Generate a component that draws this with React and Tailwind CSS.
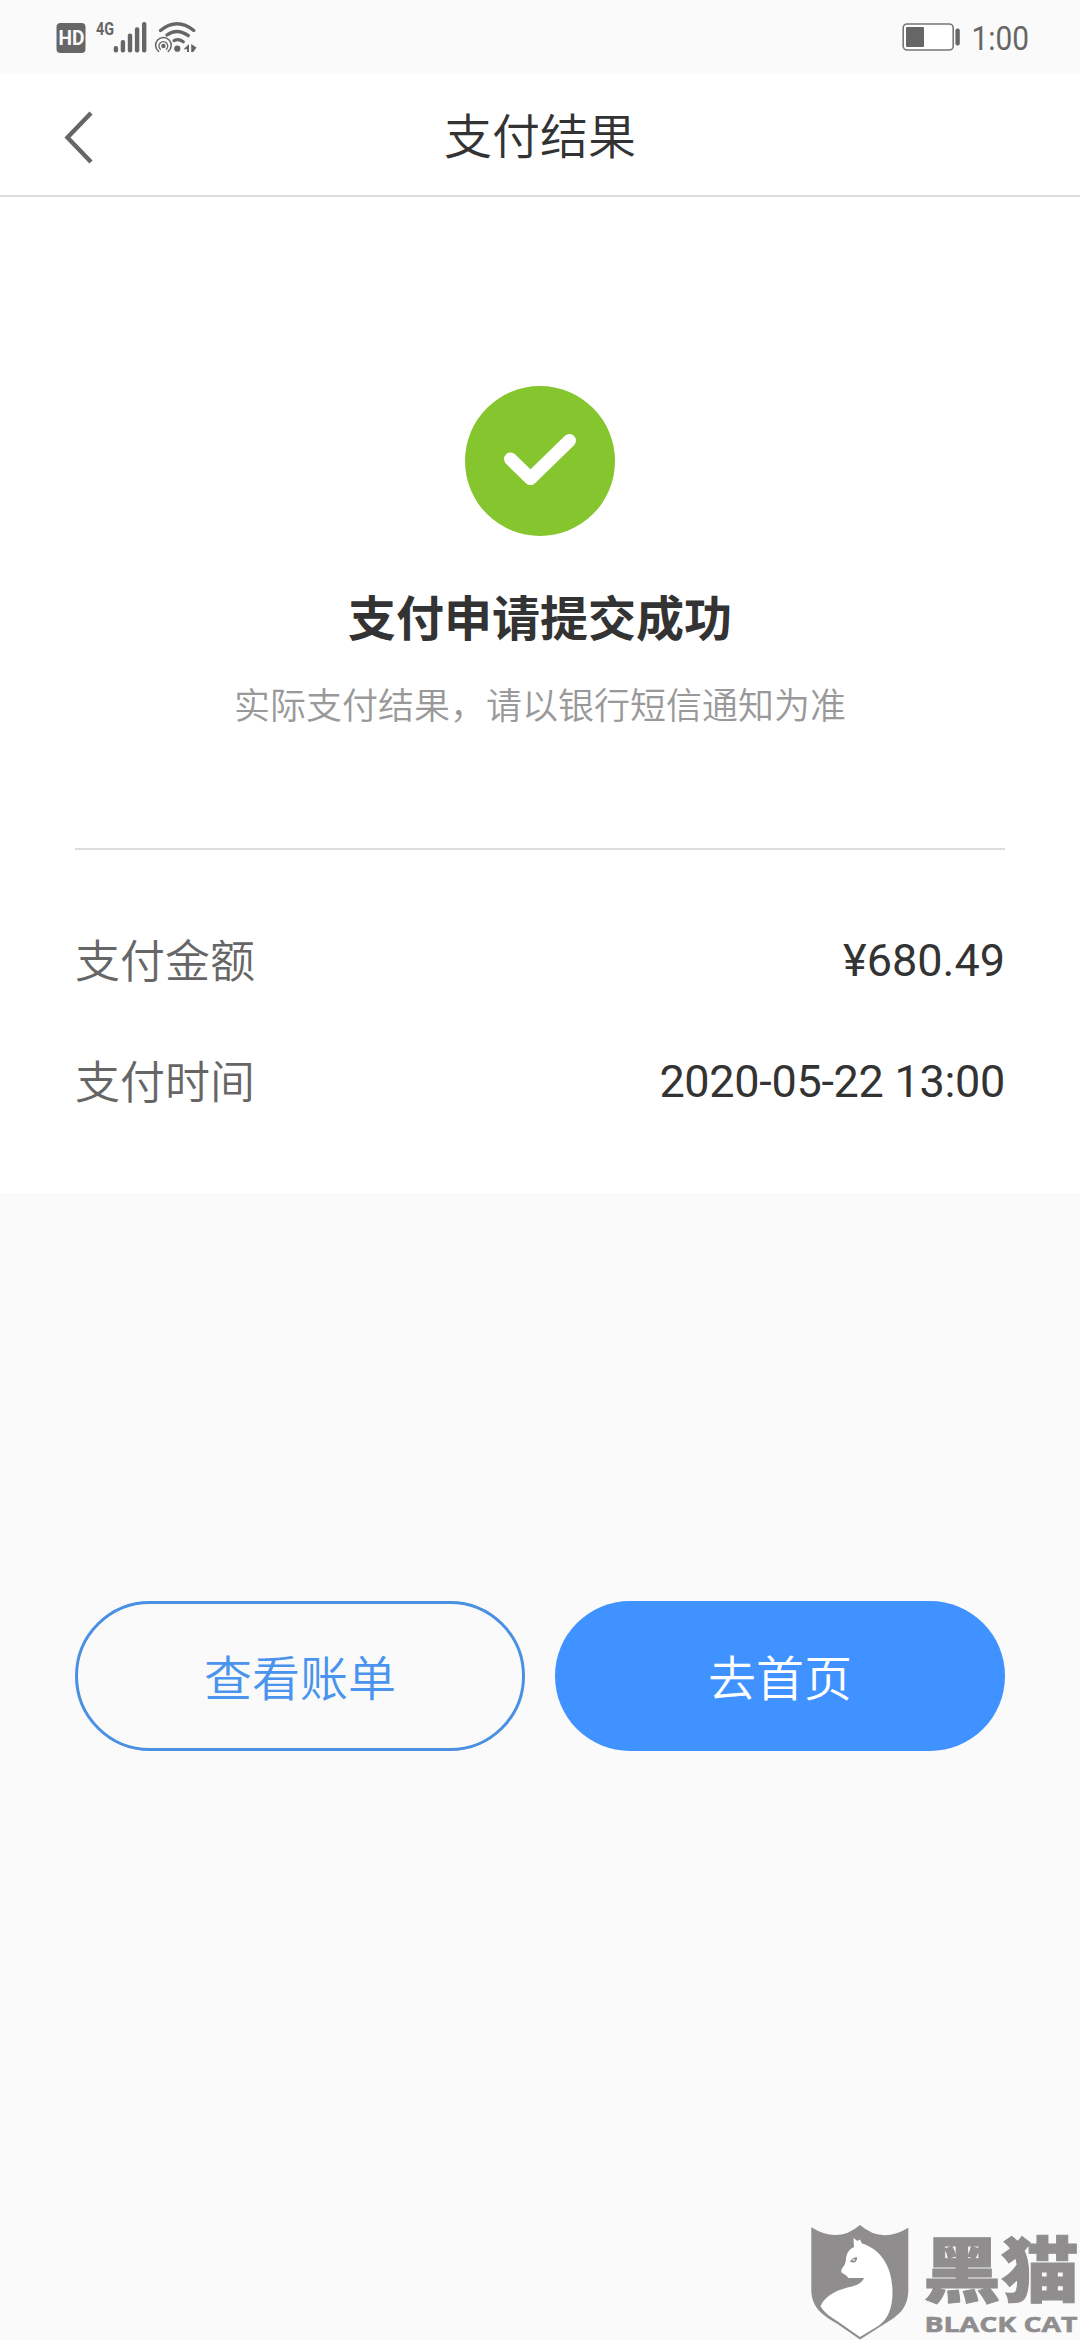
import React from "react";

// ── Data ───────────────────────────────────────────────────────────────────
const details = [
  { label: "支付金额", value: "¥680.49", valueClass: "pt-px" },
  { label: "支付时间", value: "2020-05-22 13:00", valueClass: "pt-px tracking-[-0.3px]" },
];

// ── Icons ──────────────────────────────────────────────────────────────────
const SignalIcons = () => (
  <svg width="160" height="74" viewBox="0 0 160 74" fill="#666666">
    <rect x="16.5" y="23" width="29" height="30" rx="4" />
    <text
      x="18.5"
      y="45.3"
      textLength="26"
      lengthAdjust="spacingAndGlyphs"
      fill="#fafafa"
      className="font-[Roboto] text-[20px] font-bold"
    >
      HD
    </text>
    <text
      x="56"
      y="35.3"
      textLength="18"
      lengthAdjust="spacingAndGlyphs"
      className="font-[Roboto] text-[19px] font-bold"
    >
      4G
    </text>
    <rect x="73.7" y="46" width="4.4" height="6.5" rx="2" />
    <rect x="80.7" y="40" width="4.4" height="12.5" rx="2" />
    <rect x="87.8" y="33.5" width="4.4" height="19" rx="2" />
    <rect x="94.9" y="27.3" width="4.4" height="25.2" rx="2" />
    <rect x="102" y="22" width="4.4" height="30.5" rx="2" />
    <g fill="none" stroke="#666666" strokeLinecap="round">
      <path d="M120.5 30.5Q137 17 153.8 30.5" strokeWidth="3.4" />
      <path d="M127 35Q137 27.6 148.3 35.6" strokeWidth="3.4" />
      <path d="M134 40.6Q138.5 38.4 143.3 41.8" strokeWidth="3.2" />
      <path d="M118.6 51.4A7.8 7.8 0 1 1 128.2 51.4" strokeWidth="1.5" />
      <path d="M120.3 49.2A4.4 4.4 0 1 1 126.4 49.2" strokeWidth="1.3" />
    </g>
    <circle cx="123.4" cy="46" r="2.2" />
    <circle cx="137.3" cy="48.7" r="3.1" />
    <path d="M143.6 49.3L149 44V52H147V49.3ZM151.2 44L156.5 47.5L153.3 52H151.2Z" />
  </svg>
);

const BatteryIcon = () => (
  <svg width="60" height="30" viewBox="0 0 60 30">
    <rect x="1.2" y="2" width="50" height="26" rx="4" fill="#ffffff" stroke="#777777" strokeWidth="1.6" />
    <rect x="4" y="5" width="18" height="20" rx="1" fill="#666666" />
    <rect x="53.4" y="6.5" width="4.4" height="17" rx="2" fill="#666666" />
  </svg>
);

const SuccessIcon = () => (
  <svg width="150" height="150" viewBox="0 0 150 150">
    <circle cx="75" cy="75" r="75" fill="#85c52d" />
    <path
      d="M45.5 73L65.5 92.5L104.5 54.5"
      fill="none"
      stroke="#ffffff"
      strokeWidth="13"
      strokeLinecap="round"
      strokeLinejoin="round"
    />
  </svg>
);

const BlackCatLogo = () => (
  <svg width="290" height="130" viewBox="0 0 290 130" fill="#8f8d8e">
    <path d="M21.3 17.3Q48 34 70 15Q92 34 118.3 17.8V80C118.3 98 108 106 96 113L70 129.5L46 113C34 106 21.3 98 21.3 80Z" />
    <path
      fill="#ffffff"
      d="M63.5 28L67.5 31L70 29.5L72 33.5C90 39 102.5 56 102.5 82C102.5 98 98 109 89 115.5L70 127L50 113C41 107 34 103 30.5 96C36 84 50 79 62 76.5C68 75 72.5 72 74 68L58.5 68Q56 64.5 52 63Q50.5 61 52 58.5Q56 54 56 48Q57 40 64 37Z"
    />
    <path d="M60 52Q62 47.5 67 47Q67.5 51 64 52.7Q62 52 60 52Z" />
    <circle cx="63.8" cy="50" r="0.9" fill="#ffffff" />
    <text
      x="133"
      y="86"
      textLength="156"
      lengthAdjust="spacingAndGlyphs"
      stroke="#8f8d8e"
      strokeWidth="1"
      className="font-['Noto_Sans_CJK_SC',sans-serif] text-[71px] font-black"
    >
      黑猫
    </text>
    <text
      x="134.5"
      y="122.3"
      textLength="153"
      lengthAdjust="spacingAndGlyphs"
      stroke="#8f8d8e"
      strokeWidth="0.6"
      className="font-['Open_Sans',sans-serif] text-[22px] font-bold"
    >
      BLACK CAT
    </text>
  </svg>
);

// ── Main Component ─────────────────────────────────────────────────────────
const App = () => {
  return (
    <div className="relative flex h-[2340px] w-[1080px] flex-col overflow-hidden bg-[#fafafa] font-[Roboto,'Noto_Sans_CJK_SC',sans-serif] text-[#333333]">

      {/* Status bar */}
      <div className="flex h-[74px] shrink-0 items-center justify-between pr-[37px] pl-10">
        <SignalIcons />
        <div className="flex items-center gap-[9px]">
          <BatteryIcon />
          <svg width="72" height="74" viewBox="0 0 72 74" fill="#666666">
            <text
              x="0.5"
              y="50"
              textLength="57.5"
              lengthAdjust="spacingAndGlyphs"
              className="font-[Roboto] text-[34px]"
            >
              1:00
            </text>
          </svg>
        </div>
      </div>

      {/* Header */}
      <header className="grid h-[123px] shrink-0 grid-cols-[1fr_auto_1fr] items-center border-b-2 border-[#dddddd] bg-white">
        <button className="pl-16" aria-label="返回">
          <svg width="30" height="54" viewBox="0 0 30 54" className="mt-1">
            <path d="M27 3L3.5 27.5L27 52" fill="none" stroke="#666666" strokeWidth="4.4" />
          </svg>
        </button>
        <h1 className="pb-[3px] font-['Noto_Sans_CJK_SC',sans-serif] text-[48px] leading-[64px] font-[350]">
          支付结果
        </h1>
      </header>

      {/* Result */}
      <main className="flex h-[996px] shrink-0 flex-col bg-white px-[75px]">
        <div className="flex h-[653px] flex-col items-center border-b-2 border-[#dddddd] pt-[189px]">
          <SuccessIcon />
          <h2 className="mt-[47px] font-['Noto_Sans_CJK_SC',sans-serif] text-[48px] leading-[64px] font-bold">
            支付申请提交成功
          </h2>
          <p className="mt-8 font-['Noto_Sans_CJK_SC',sans-serif] text-[36px] leading-[48px] font-[350] text-[#999999]">
            实际支付结果，请以银行短信通知为准
          </p>
        </div>

        <dl className="flex flex-col gap-[61px] pt-[80px] text-[45px] leading-[60px]">
          {details.map((item) => (
            <div key={item.label} className="flex h-[60px] justify-between">
              <dt className="-mt-px font-['Noto_Sans_CJK_SC',sans-serif] font-[350] text-[#666666]">
                {item.label}
              </dt>
              <dd className={item.valueClass}>{item.value}</dd>
            </div>
          ))}
        </dl>
      </main>

      {/* Actions */}
      <div className="mt-[408px] grid grid-cols-2 gap-[30px] px-[75px] font-['Noto_Sans_CJK_SC',sans-serif] text-[48px] font-[350]">
        <button className="h-[150px] rounded-full border-3 border-[#4a90e2] pb-[3px] text-[#4a94ee]">
          查看账单
        </button>
        <button className="h-[150px] rounded-full bg-[#3f92ff] pb-[3px] text-white">
          去首页
        </button>
      </div>

      {/* Watermark */}
      <div className="absolute right-0 bottom-0">
        <BlackCatLogo />
      </div>
    </div>
  );
};

export default App;
